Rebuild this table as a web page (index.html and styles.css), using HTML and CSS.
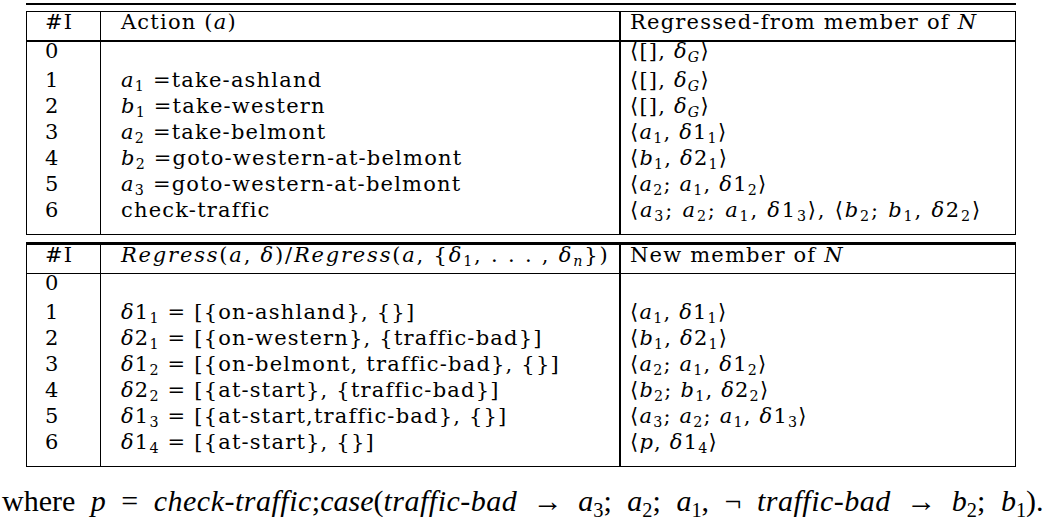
FILE: index.html
```html
<!DOCTYPE html>
<html>
<head>
<meta charset="utf-8">
<link rel="stylesheet" href="styles.css">
</head>
<body>
<div class="page">
  <div class="rule"></div>

  <div class="tbl t1">
    <div class="h c1">#I</div>
    <div class="h c2">Action (<i>a</i>)</div>
    <div class="h c3">Regressed-from member of <i>N</i></div>

    <div class="c1 r0">0</div><div class="c2 r0"></div><div class="c3 r0">⟨[], <i>δ</i><sub><i>G</i></sub>⟩</div>
    <div class="c1">1</div><div class="c2"><i>a</i><sub>1</sub> =take-ashland</div><div class="c3">⟨[], <i>δ</i><sub><i>G</i></sub>⟩</div>
    <div class="c1">2</div><div class="c2"><i>b</i><sub>1</sub> =take-western</div><div class="c3">⟨[], <i>δ</i><sub><i>G</i></sub>⟩</div>
    <div class="c1">3</div><div class="c2"><i>a</i><sub>2</sub> =take-belmont</div><div class="c3">⟨<i>a</i><sub>1</sub>, <i>δ</i>1<sub>1</sub>⟩</div>
    <div class="c1">4</div><div class="c2"><i>b</i><sub>2</sub> =goto-western-at-belmont</div><div class="c3">⟨<i>b</i><sub>1</sub>, <i>δ</i>2<sub>1</sub>⟩</div>
    <div class="c1">5</div><div class="c2"><i>a</i><sub>3</sub> =goto-western-at-belmont</div><div class="c3">⟨<i>a</i><sub>2</sub>; <i>a</i><sub>1</sub>, <i>δ</i>1<sub>2</sub>⟩</div>
    <div class="c1 rl">6</div><div class="c2 rl">check-traffic</div><div class="c3 rl wide">⟨<i>a</i><sub>3</sub>; <i>a</i><sub>2</sub>; <i>a</i><sub>1</sub>, <i>δ</i>1<sub>3</sub>⟩, ⟨<i>b</i><sub>2</sub>; <i>b</i><sub>1</sub>, <i>δ</i>2<sub>2</sub>⟩</div>
  </div>

  <div class="tbl t2">
    <div class="h c1">#I</div>
    <div class="h c2 wide"><i>Regress</i>(<i>a</i>, <i>δ</i>)/<i>Regress</i>(<i>a</i>, {<i>δ</i><sub>1</sub>, . . . , <i>δ</i><sub><i>n</i></sub>})</div>
    <div class="h c3">New member of <i>N</i></div>

    <div class="c1 r0">0</div><div class="c2 r0"></div><div class="c3 r0"></div>
    <div class="c1">1</div><div class="c2"><i>δ</i>1<sub>1</sub> = [{on-ashland}, {}]</div><div class="c3">⟨<i>a</i><sub>1</sub>, <i>δ</i>1<sub>1</sub>⟩</div>
    <div class="c1">2</div><div class="c2"><i>δ</i>2<sub>1</sub> = [{on-western}, {traffic-bad}]</div><div class="c3">⟨<i>b</i><sub>1</sub>, <i>δ</i>2<sub>1</sub>⟩</div>
    <div class="c1">3</div><div class="c2"><i>δ</i>1<sub>2</sub> = [{on-belmont, traffic-bad}, {}]</div><div class="c3">⟨<i>a</i><sub>2</sub>; <i>a</i><sub>1</sub>, <i>δ</i>1<sub>2</sub>⟩</div>
    <div class="c1">4</div><div class="c2"><i>δ</i>2<sub>2</sub> = [{at-start}, {traffic-bad}]</div><div class="c3">⟨<i>b</i><sub>2</sub>; <i>b</i><sub>1</sub>, <i>δ</i>2<sub>2</sub>⟩</div>
    <div class="c1">5</div><div class="c2"><i>δ</i>1<sub>3</sub> = [{at-start,traffic-bad}, {}]</div><div class="c3">⟨<i>a</i><sub>3</sub>; <i>a</i><sub>2</sub>; <i>a</i><sub>1</sub>, <i>δ</i>1<sub>3</sub>⟩</div>
    <div class="c1 rl">6</div><div class="c2 rl"><i>δ</i>1<sub>4</sub> = [{at-start}, {}]</div><div class="c3 rl">⟨<i>p</i>, <i>δ</i>1<sub>4</sub>⟩</div>
  </div>

  <p class="where">where <i>p</i> = <i class="m">check-traffic</i>;<i>case</i>(<i class="m">traffic-bad</i> → <i>a</i><sub>3</sub>; <i>a</i><sub>2</sub>; <i>a</i><sub>1</sub>, ¬ <i class="m">traffic-bad</i> → <i>b</i><sub>2</sub>; <i>b</i><sub>1</sub>).</p>
</div>
</body>
</html>
```

FILE: styles.css
```css
html, body {
  margin: 0;
  padding: 0;
  background: #ffffff;
  color: #000000;
}

.page {
  padding-top: 3px;
  font-family: "DejaVu Serif", "DejaVu Sans", serif;
}

.rule {
  margin-left: 26px;
  width: 990px;
  height: 2px;
  background: #000000;
}

.tbl {
  display: grid;
  grid-template-columns: 74px 520px 1fr;
  width: 990px;
  box-sizing: border-box;
  margin-left: 26px;
  border: 1px solid #000000;
  font-size: 21px;
  letter-spacing: 1.2px;
  white-space: nowrap;
}

.t1 {
  margin-top: 6px;
}

.t2 {
  margin-top: 7px;
  border-top-width: 3px;
}

.tbl > div {
  line-height: 26px;
}

.c1 {
  border-right: 1px solid #000000;
  padding-left: 18px;
}

.c2 {
  border-right: 2px solid #000000;
  padding-left: 20px;
}

.c3 {
  padding-left: 9px;
}

.tbl > .wide {
  letter-spacing: 1.8px;
}

.tbl > .h {
  line-height: 21px;
  padding-bottom: 7px;
}

.t1 > .h {
  border-bottom: 2px solid #000000;
}

.t2 > .h {
  border-bottom: 1px solid #000000;
}

.tbl > .r0 {
  line-height: 19px;
  padding-bottom: 6px;
}

.tbl > .rl {
  padding-bottom: 11px;
}

i {
  font-style: italic;
}

sub {
  font-size: 0.68em;
  line-height: 0;
  vertical-align: -0.3em;
}

.where {
  margin: 17px 0 0 0;
  padding-left: 2px;
  font-family: "Liberation Serif", "DejaVu Serif", serif;
  font-size: 30px;
  line-height: 33px;
  white-space: nowrap;
  word-spacing: 8px;
}

.where .m {
  font-variant-ligatures: none;
  letter-spacing: 0.5px;
}
```
